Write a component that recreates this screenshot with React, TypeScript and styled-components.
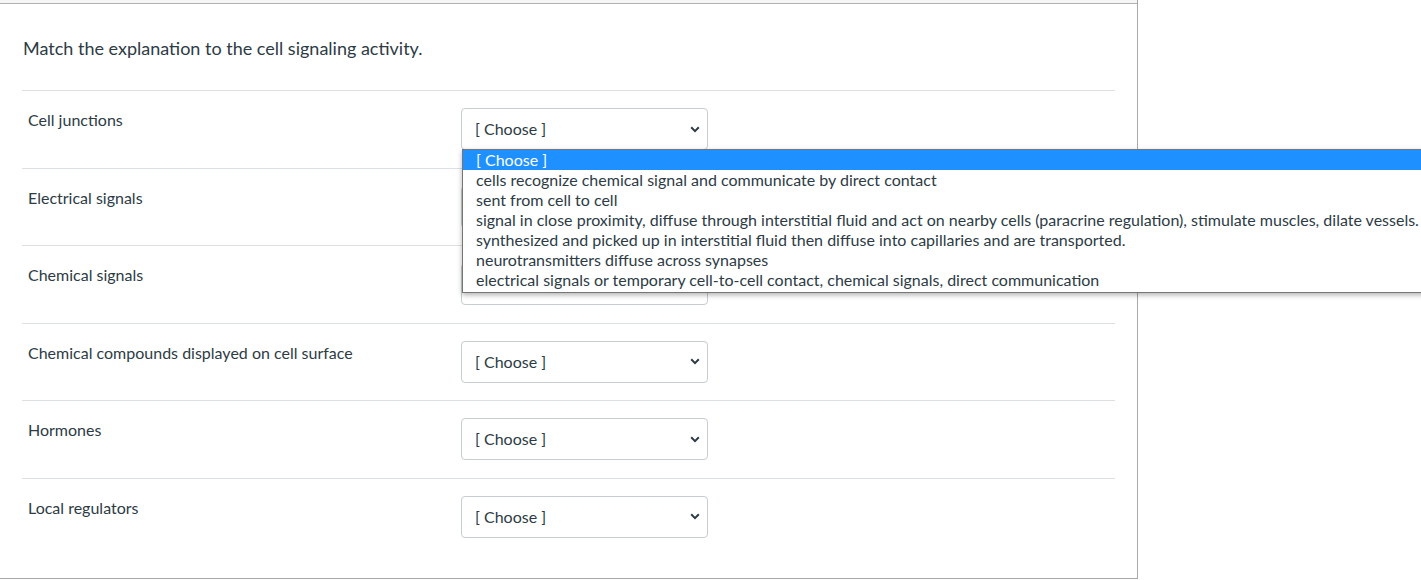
import React from "react";
import styled, { createGlobalStyle } from "styled-components";

const GlobalStyle = createGlobalStyle`
  html, body {
    margin: 0;
    padding: 0;
    background: #fff;
    overflow: hidden;
  }
  body {
    font-family: "Lato", "Liberation Sans", sans-serif;
    color: #2d3b45;
  }
`;

const Panel = styled.div`
  width: 1138px;
  height: 579px;
  box-sizing: border-box;
  border-right: 1px solid #a8a8a8;
  border-bottom: 1px solid #a8a8a8;
`;

const HeaderStrip = styled.div`
  height: 3px;
  background: #f5f5f5;
  border-bottom: 1px solid #b0b0b0;
`;

const Question = styled.p`
  margin: 32px 0 0;
  padding: 0 23px;
  font-size: 18px;
  line-height: 25px;
`;

const Answers = styled.div`
  margin: 29px 22px 0;
`;

const Row = styled.div`
  display: grid;
  grid-template-columns: 439px 1fr;
  border-top: 1px solid #dde1e4;
  padding: 17px 0 17.6px;
`;

const Label = styled.div`
  padding: 2px 0 0 6px;
  font-size: 16px;
  line-height: 20px;
`;

const SelectBox = styled.div`
  position: relative;
  width: 247px;
  height: 42px;
  box-sizing: border-box;
  border: 1px solid #c7cdd1;
  border-radius: 4px;
  display: flex;
  align-items: center;
  justify-content: space-between;
  padding: 0 7px 0 13px;
  font-size: 16px;
  background: #fff;
`;

const SelectText = styled.span`
  line-height: 20px;
`;

const Chevron = () => (
  <svg width="10" height="7" viewBox="0 0 10 7">
    <path d="M1.2 1.3 L5 5.1 L8.8 1.3" fill="none" stroke="#2d3b45" strokeWidth="2" />
  </svg>
);

const Popup = styled.ul`
  position: absolute;
  left: 0;
  top: 40px;
  z-index: 10;
  margin: 0;
  padding: 0 0 2px;
  list-style: none;
  width: 980px;
  background: #fff;
  border: 1px solid #767676;
  box-shadow: 0 2px 5px rgba(0, 0, 0, 0.3);
`;

const Option = styled.li<{ $active?: boolean }>`
  height: 20px;
  line-height: 20px;
  padding-left: 13px;
  font-size: 16px;
  white-space: nowrap;
  color: ${(p) => (p.$active ? "#fff" : "#2d3b45")};
  background: ${(p) => (p.$active ? "#1e90ff" : "transparent")};
`;

const rows = [
  "Cell junctions",
  "Electrical signals",
  "Chemical signals",
  "Chemical compounds displayed on cell surface",
  "Hormones",
  "Local regulators",
];

const options = [
  "[ Choose ]",
  "cells recognize chemical signal and communicate by direct contact",
  "sent from cell to cell",
  "signal in close proximity, diffuse through interstitial fluid and act on nearby cells (paracrine regulation), stimulate muscles, dilate vessels.",
  "synthesized and picked up in interstitial fluid then diffuse into capillaries and are transported.",
  "neurotransmitters diffuse across synapses",
  "electrical signals or temporary cell-to-cell contact, chemical signals, direct communication",
];

export default function App() {
  return (
    <>
      <GlobalStyle />
      <Panel>
        <HeaderStrip />
        <Question>Match the explanation to the cell signaling activity.</Question>
        <Answers>
          {rows.map((label, i) => (
            <Row key={label}>
              <Label>{label}</Label>
              <div>
                <SelectBox>
                  <SelectText>[ Choose ]</SelectText>
                  <Chevron />
                  {i === 0 && (
                    <Popup>
                      {options.map((o, j) => (
                        <Option key={o} $active={j === 0}>
                          {o}
                        </Option>
                      ))}
                    </Popup>
                  )}
                </SelectBox>
              </div>
            </Row>
          ))}
        </Answers>
      </Panel>
    </>
  );
}
